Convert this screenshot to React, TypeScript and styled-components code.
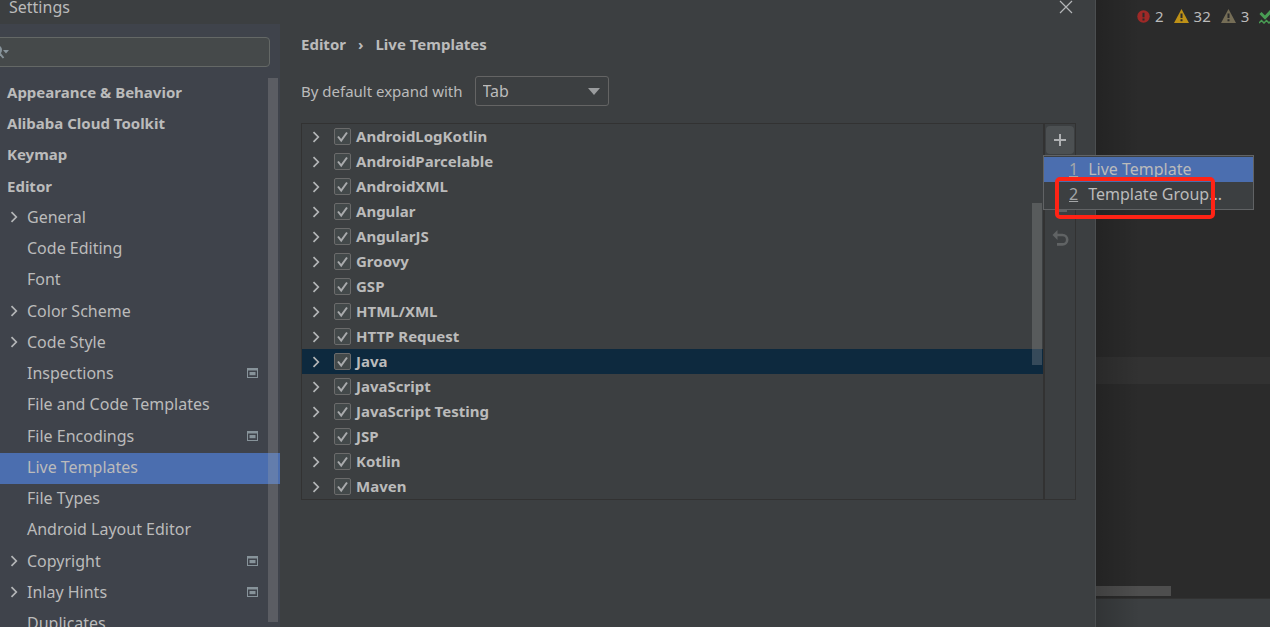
import React from 'react';
import styled, { createGlobalStyle } from 'styled-components';

const GlobalStyle = createGlobalStyle`
  *, *::before, *::after { box-sizing: border-box; }
  body {
    margin: 0;
    background: #2b2b2b;
    color: #bbbbbb;
    font-family: 'Noto Sans', 'Open Sans', sans-serif;
    font-size: 15px;
    line-height: 24px;
  }
  button, input, select { font: inherit; color: inherit; }
  ul { list-style: none; margin: 0; padding: 0; }
`;

const Screen = styled.div`
  display: grid;
  grid-template-columns: minmax(0, 1fr) 174px;
  height: 100vh;
  overflow: hidden;
`;

const Dialog = styled.section`
  display: flex;
  flex-direction: column;
  min-height: 0;
  background: #3c3f41;
  border-right: 1px solid #4b4e50;
`;

const TitleBar = styled.header`
  display: flex;
  justify-content: space-between;
  align-items: center;
  flex: none;
  height: 24px;
  padding: 0 22px 10px 9px;
`;

const Title = styled.h1`
  margin: 0;
  font-size: 16px;
  font-weight: 400;
  line-height: 14px;
`;

const IconButton = styled.button<{ $size: number; $raised?: boolean }>`
  display: flex;
  align-items: center;
  justify-content: center;
  width: ${(p) => p.$size}px;
  height: ${(p) => p.$size}px;
  padding: 0;
  border: 0;
  border-radius: 4px;
  background: ${(p) => (p.$raised ? '#4c5052' : 'transparent')};
`;

const Body = styled.div`
  display: flex;
  flex: 1;
  min-height: 0;
`;

const Sidebar = styled.nav`
  display: flex;
  flex-direction: column;
  flex: none;
  width: 280px;
  background: #3f434b;
`;

const SearchField = styled.label`
  display: flex;
  align-items: center;
  flex: none;
  height: 30px;
  margin: 13px 10px 11px -8px;
  padding-left: 3px;
  border: 1px solid #646866;
  border-radius: 4px;
  background: #45494a;
`;

const SearchInput = styled.input`
  flex: 1;
  min-width: 0;
  padding: 0 4px;
  border: 0;
  outline: 0;
  background: transparent;
`;

const TreeArea = styled.div`
  position: relative;
  flex: 1;
  min-height: 0;
  overflow: hidden;
`;

const TreeRow = styled.li<{ $selected?: boolean }>`
  height: 31px;
  background: ${(p) => (p.$selected ? '#4b6eaf' : 'transparent')};
  &:nth-child(4n) { height: 32px; }
`;

const TreeLink = styled.a<{ $top?: boolean }>`
  display: flex;
  align-items: center;
  height: 100%;
  padding: 0 22px 3px 7px;
  color: inherit;
  font-size: ${(p) => (p.$top ? 15 : 16)}px;
  font-weight: ${(p) => (p.$top ? 700 : 400)};
  text-decoration: none;
`;

const ChevronSlot = styled.span<{ $width: number; $pad: number }>`
  display: flex;
  flex: none;
  width: ${(p) => p.$width}px;
  padding-left: ${(p) => p.$pad}px;
`;

const Grow = styled.span`
  flex: 1;
`;

const Thumb = styled.div<{ $top: number; $bottom: number; $right: number }>`
  position: absolute;
  top: ${(p) => p.$top}px;
  bottom: ${(p) => p.$bottom}px;
  right: ${(p) => p.$right}px;
  width: 10px;
  background: rgba(166, 166, 166, 0.27);
`;

const Main = styled.main`
  display: flex;
  flex-direction: column;
  flex: 1;
  min-width: 0;
  padding: 8px 19px 0 21px;
`;

const Breadcrumb = styled.div`
  display: flex;
  align-items: center;
  gap: 12px;
  font-weight: 700;
`;

const ExpandRow = styled.div`
  display: flex;
  align-items: center;
  gap: 12px;
  margin: 20px 0 17px;
`;

const SelectBox = styled.div`
  display: grid;
  grid-template-columns: minmax(0, 1fr) 21px;
  align-items: center;
  width: 134px;
  height: 30px;
`;

const Select = styled.select`
  grid-area: 1 / 1 / 2 / 3;
  height: 30px;
  padding: 0 7px;
  border: 1px solid #646464;
  border-radius: 3px;
  background: transparent;
  font-size: 16px;
  appearance: none;
`;

const SelectArrow = styled.svg`
  grid-area: 1 / 2;
  pointer-events: none;
`;

const Templates = styled.div`
  display: flex;
  border: 1px solid #323232;
`;

const TemplateArea = styled.div`
  position: relative;
  flex: 1;
  border-right: 2px solid #323232;
`;

const TemplateRow = styled.li<{ $selected?: boolean }>`
  display: flex;
  align-items: center;
  height: 25px;
  padding-left: 4px;
  background: ${(p) => (p.$selected ? '#0d293e' : 'transparent')};
`;

const CheckLabel = styled.label`
  display: grid;
  grid-template-columns: 17px auto;
  column-gap: 5px;
  align-items: center;
  margin-left: 8px;
  font-weight: 700;
`;

const CheckText = styled.span`
  padding-bottom: 1px;
`;

const Checkbox = styled.input`
  grid-area: 1 / 1;
  width: 17px;
  height: 17px;
  margin: 0;
  border: 1px solid #6b6b6b;
  border-radius: 2px;
  background: #43494a;
  appearance: none;
  & + svg { visibility: hidden; }
  &:checked + svg { visibility: visible; }
`;

const CheckMark = styled.svg`
  grid-area: 1 / 1;
  pointer-events: none;
`;

const Toolbar = styled.div`
  position: relative;
  display: flex;
  flex-direction: column;
  align-items: center;
  gap: 5px;
  width: 30px;
  padding-top: 2px;
`;

const Menu = styled.div`
  position: absolute;
  z-index: 2;
  top: 31px;
  left: -2px;
  width: 211px;
  padding: 1px 0 2px;
  border: 1px solid #616365;
  background: #3c3f41;
`;

const MenuItem = styled.button<{ $active?: boolean }>`
  display: flex;
  gap: 10px;
  width: 100%;
  height: 25px;
  padding: 0 0 0 25px;
  border: 0;
  background: ${(p) => (p.$active ? '#4b6eaf' : 'transparent')};
  font-size: 16px;
  line-height: 24px;
  text-align: left;
`;

const Mnemonic = styled.u`
  color: #a4a6a8;
  text-underline-offset: 1px;
`;

const Highlight = styled.div`
  position: absolute;
  z-index: 3;
  top: 53px;
  left: 10px;
  width: 160px;
  height: 42px;
  border: 4px solid #ff2315;
  border-radius: 5px;
  pointer-events: none;
`;

const Editor = styled.aside`
  position: relative;
  display: flex;
  flex-direction: column;
  background: #2b2b2b;
  overflow: hidden;
  &::after {
    content: '';
    position: absolute;
    inset: 0 auto 0 0;
    width: 44px;
    background: linear-gradient(to right, rgba(0, 0, 0, 0.18), transparent);
  }
`;

const Problems = styled.div`
  display: flex;
  align-items: center;
  flex: none;
  height: 33px;
  padding: 0 0 1px 41px;
`;

const Problem = styled.span`
  display: flex;
  align-items: center;
  gap: 5px;
  flex: none;
  margin-right: 10px;
`;

const CodeArea = styled.div`
  flex: 1;
  padding-top: 324px;
`;

const CaretLine = styled.div`
  height: 27px;
  background: #323232;
`;

const HorizontalThumb = styled.div`
  width: 75px;
  height: 10px;
  margin-bottom: 2px;
  background: #4e4e4e;
`;

const StatusBar = styled.footer`
  height: 29px;
  border-top: 1px solid #323232;
  background: #3c3f41;
`;

const ResultIcon = styled.svg`
  flex: none;
`;

const Chevron = () => (
  <svg width="8" height="12" viewBox="0 0 8 12" fill="none" stroke="#b4b6b8" strokeWidth="1.7" aria-hidden="true">
    <path d="M1.5 1.2 6.3 6 1.5 10.8" />
  </svg>
);

const ProjectIcon = () => (
  <svg width="11" height="10" viewBox="0 0 11 10" aria-hidden="true">
    <path fill="#87939a" fillRule="evenodd" d="M0 0h11v10H0zM1 2.5V9h9V2.5z" />
    <path fill="#87939a" d="M2.5 4h6v3.2h-6z" />
  </svg>
);

const Warning = ({ color }: { color: string }) => (
  <svg width="15" height="14" viewBox="0 0 15 14" aria-hidden="true">
    <path fill={color} d="M7.5 0 15 14H0z" />
    <path fill="#2b2b2b" d="M6.5 4.5h2V9h-2zM6.5 10.2h2v2h-2z" />
  </svg>
);

type Node = { name: string; top?: boolean; open?: boolean; project?: boolean; selected?: boolean };

const nodes: Node[] = [
  { name: 'Appearance & Behavior', top: true },
  { name: 'Alibaba Cloud Toolkit', top: true },
  { name: 'Keymap', top: true },
  { name: 'Editor', top: true },
  { name: 'General', open: true },
  { name: 'Code Editing' },
  { name: 'Font' },
  { name: 'Color Scheme', open: true },
  { name: 'Code Style', open: true },
  { name: 'Inspections', project: true },
  { name: 'File and Code Templates' },
  { name: 'File Encodings', project: true },
  { name: 'Live Templates', selected: true },
  { name: 'File Types' },
  { name: 'Android Layout Editor' },
  { name: 'Copyright', open: true, project: true },
  { name: 'Inlay Hints', open: true, project: true },
  { name: 'Duplicates' },
];

const templates = [
  'AndroidLogKotlin', 'AndroidParcelable', 'AndroidXML', 'Angular', 'AngularJS',
  'Groovy', 'GSP', 'HTML/XML', 'HTTP Request', 'Java', 'JavaScript',
  'JavaScript Testing', 'JSP', 'Kotlin', 'Maven',
];

export default function App() {
  return (
    <Screen>
      <GlobalStyle />
      <Dialog aria-label="Settings">
        <TitleBar>
          <Title>Settings</Title>
          <IconButton $size={14} aria-label="Close">
            <svg width="14" height="14" viewBox="0 0 14 14" stroke="#b4b6b8" strokeWidth="1.2">
              <path d="M1 1l12 12M13 1 1 13" />
            </svg>
          </IconButton>
        </TitleBar>
        <Body>
          <Sidebar>
            <SearchField>
              <svg width="14" height="16" viewBox="0 0 14 16" fill="none" aria-hidden="true">
                <circle cx="1" cy="6" r="4" stroke="#87939a" strokeWidth="2" />
                <path d="M3.5 9l4 5" stroke="#87939a" strokeWidth="2" />
                <path d="M7 6h6l-3 3.5z" fill="#87939a" />
              </svg>
              <SearchInput type="text" aria-label="Search settings" />
            </SearchField>
            <TreeArea>
              <ul>
                {nodes.map((n) => (
                  <TreeRow key={n.name} $selected={n.selected}>
                    <TreeLink href="#" $top={n.top}>
                      {!n.top && <ChevronSlot $width={20} $pad={3}>{n.open && <Chevron />}</ChevronSlot>}
                      <Grow>{n.name}</Grow>
                      {n.project && <ProjectIcon />}
                    </TreeLink>
                  </TreeRow>
                ))}
              </ul>
              <Thumb $top={0} $bottom={5} $right={2} />
            </TreeArea>
          </Sidebar>
          <Main>
            <Breadcrumb>
              <span>Editor</span>
              <span>›</span>
              <span>Live Templates</span>
            </Breadcrumb>
            <ExpandRow>
              <label htmlFor="expand">By default expand with</label>
              <SelectBox>
                <Select id="expand" defaultValue="Tab">
                  <option>Tab</option>
                  <option>Enter</option>
                  <option>Space</option>
                </Select>
                <SelectArrow width="12" height="7" viewBox="0 0 12 7">
                  <path fill="#9a9c9e" d="M0 0h12L6 7z" />
                </SelectArrow>
              </SelectBox>
            </ExpandRow>
            <Templates>
              <TemplateArea>
                <ul>
                  {templates.map((t) => (
                    <TemplateRow key={t} $selected={t === 'Java'}>
                      <ChevronSlot $width={20} $pad={6}><Chevron /></ChevronSlot>
                      <CheckLabel>
                        <Checkbox type="checkbox" defaultChecked />
                        <CheckMark width="17" height="17" viewBox="0 0 17 17" fill="none">
                          <path d="M4 8.5l3.2 4L13 4.5" stroke="#a9abad" strokeWidth="2" />
                        </CheckMark>
                        <CheckText>{t}</CheckText>
                      </CheckLabel>
                    </TemplateRow>
                  ))}
                </ul>
                <Thumb $top={79} $bottom={134} $right={1} />
              </TemplateArea>
              <Toolbar>
                <IconButton $size={28} $raised aria-label="Add">
                  <svg width="12" height="12" viewBox="0 0 12 12" stroke="#afb1b3" strokeWidth="2">
                    <path d="M6 0v12M0 6h12" />
                  </svg>
                </IconButton>
                <IconButton $size={28} aria-label="Remove">
                  <svg width="12" height="12" viewBox="0 0 12 12" stroke="#606364" strokeWidth="2">
                    <path d="M0 6h12" />
                  </svg>
                </IconButton>
                <IconButton $size={28} aria-label="Duplicate">
                  <svg width="14" height="14" viewBox="0 0 14 14" fill="#606364">
                    <path d="M0 0h9v3H3v8H0zM4 4h10v9H4z" />
                  </svg>
                </IconButton>
                <IconButton $size={28} aria-label="Restore defaults">
                  <svg width="18" height="18" viewBox="0 0 18 18" fill="none">
                    <path d="M5 5h6.5a4.7 4.7 0 0 1 0 9.4H6" stroke="#606364" strokeWidth="2.6" />
                    <path d="M6.5 0v10L1.5 5z" fill="#606364" />
                  </svg>
                </IconButton>
                <Menu role="menu">
                  <MenuItem role="menuitem" $active><Mnemonic>1</Mnemonic>Live Template</MenuItem>
                  <MenuItem role="menuitem"><Mnemonic>2</Mnemonic>Template Group...</MenuItem>
                </Menu>
                <Highlight />
              </Toolbar>
            </Templates>
          </Main>
        </Body>
      </Dialog>
      <Editor>
        <Problems>
          <Problem>
            <svg width="13" height="13" viewBox="0 0 13 13" aria-hidden="true">
              <circle cx="6.5" cy="6.5" r="6.2" fill="#9e2927" />
              <path fill="#2b2b2b" d="M5.5 2.8h2v4.4h-2zM5.5 8.5h2v2h-2z" />
            </svg>
            2
          </Problem>
          <Problem><Warning color="#be9117" />32</Problem>
          <Problem><Warning color="#756d56" />3</Problem>
          <ResultIcon width="18" height="16" viewBox="0 0 18 16" fill="none" stroke="#499c54" aria-hidden="true">
            <path d="M1.5 5l4.5 4.5L14 1" strokeWidth="3" />
            <path d="M0 15l2.5-2.5L5 15l2.5-2.5L10 15l2.5-2.5L15 15" strokeWidth="1.5" />
          </ResultIcon>
        </Problems>
        <CodeArea><CaretLine /></CodeArea>
        <HorizontalThumb />
        <StatusBar />
      </Editor>
    </Screen>
  );
}
